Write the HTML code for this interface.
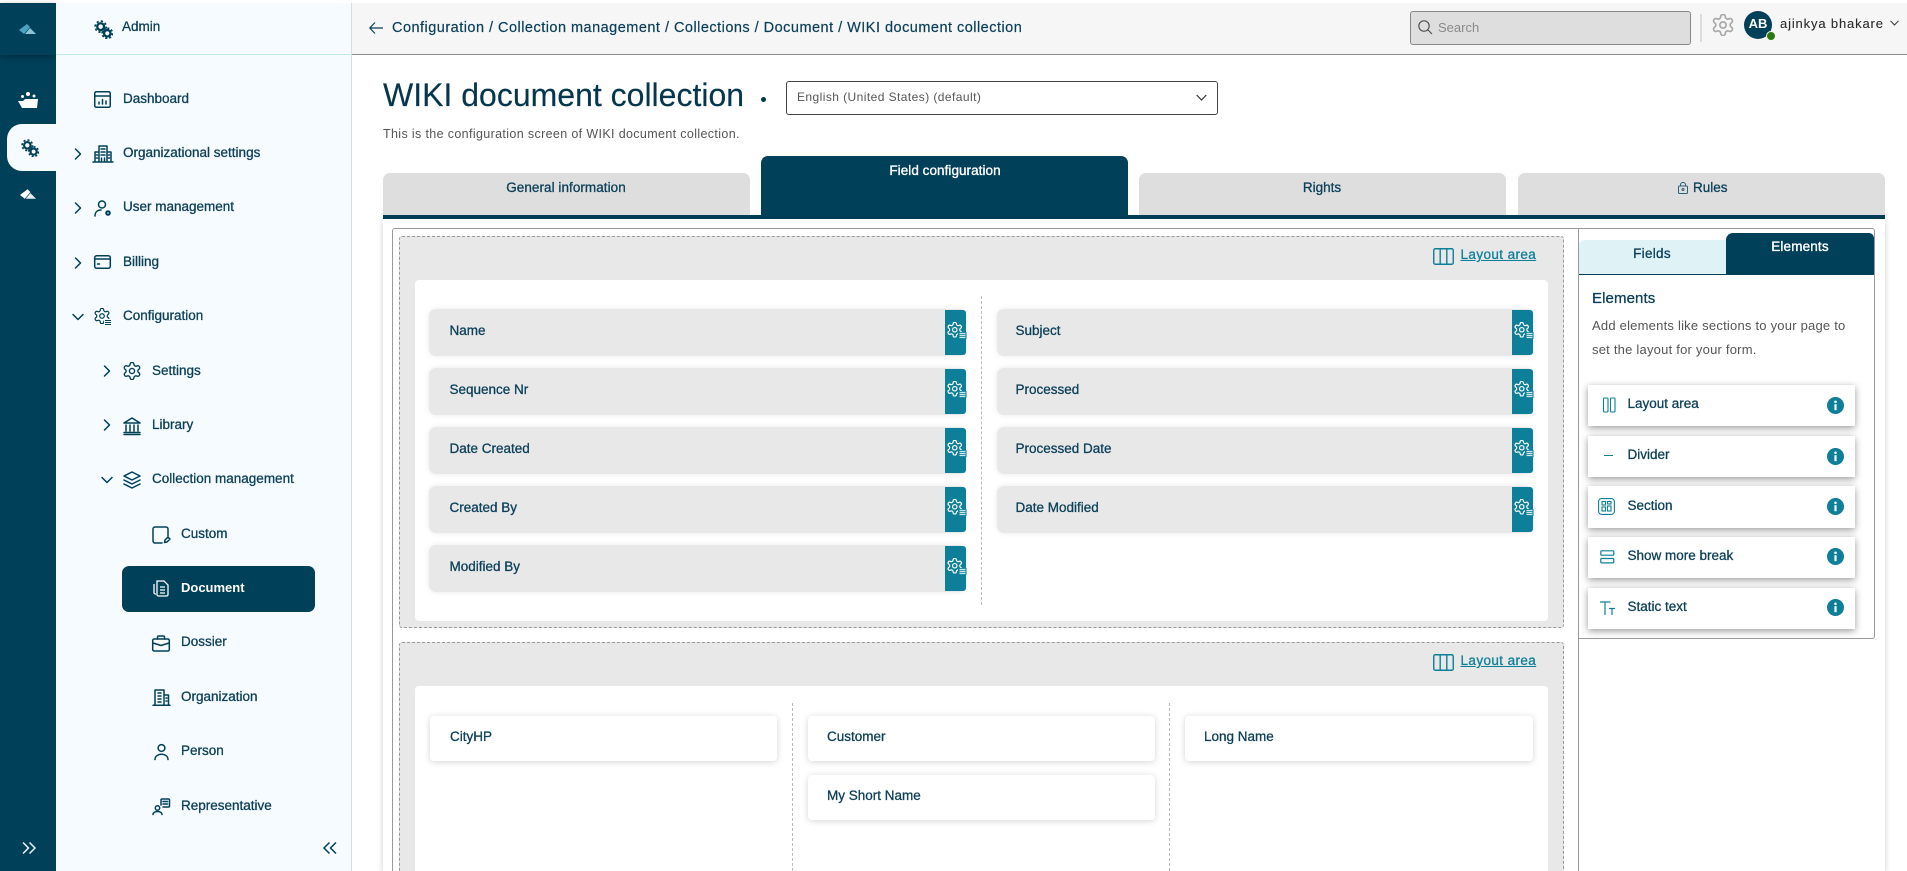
<!DOCTYPE html>
<html lang="en"><head><meta charset="utf-8"><title>WIKI document collection</title>
<style>
html,body{margin:0;padding:0;width:1907px;height:871px;overflow:hidden;background:#fff}
body{position:relative;font-family:"Liberation Sans",sans-serif;color:#004059}
.a{position:absolute;box-sizing:border-box}
.t{position:absolute;white-space:nowrap;transform:translateY(-50%);font-size:13.5px;line-height:16px;color:#0b3f58;-webkit-text-stroke:.3px currentColor}
.c{transform:translate(-50%,-50%)}
svg{position:absolute;overflow:visible}
.f{position:absolute;background:#e8e8e8;border-radius:7px;box-shadow:0 0 6px rgba(0,0,0,.09)}
.b{position:absolute;background:#0d7f99;border-radius:0 3px 3px 0;width:21px;height:45px}
.card{position:absolute;background:#fff;border-radius:4px;box-shadow:0 1px 7px rgba(0,0,0,.17);height:45px}
.el{position:absolute;left:1588px;width:267px;background:#fff;box-shadow:0 2px 7px rgba(0,0,0,.4)}
.ln{fill:none;stroke:#004059;stroke-width:1.5;stroke-linecap:round;stroke-linejoin:round}
</style></head><body>
<svg width="0" height="0" style="position:absolute"><defs>
<symbol id="gear" viewBox="1.5 1.5 21 21"><path fill="none" stroke="currentColor" stroke-width="1.6" d="M12.22 2h-.44a2 2 0 0 0-2 2v.18a2 2 0 0 1-1 1.73l-.43.25a2 2 0 0 1-2 0l-.15-.08a2 2 0 0 0-2.73.73l-.22.38a2 2 0 0 0 .73 2.73l.15.1a2 2 0 0 1 1 1.72v.51a2 2 0 0 1-1 1.74l-.15.09a2 2 0 0 0-.73 2.73l.22.38a2 2 0 0 0 2.73.73l.15-.08a2 2 0 0 1 2 0l.43.25a2 2 0 0 1 1 1.73V20a2 2 0 0 0 2 2h.44a2 2 0 0 0 2-2v-.18a2 2 0 0 1 1-1.73l.43-.25a2 2 0 0 1 2 0l.15.08a2 2 0 0 0 2.73-.73l.22-.39a2 2 0 0 0-.73-2.73l-.15-.08a2 2 0 0 1-1-1.74v-.5a2 2 0 0 1 1-1.74l.15-.09a2 2 0 0 0 .73-2.73l-.22-.38a2 2 0 0 0-2.73-.73l-.15.08a2 2 0 0 1-2 0l-.43-.25a2 2 0 0 1-1-1.73V4a2 2 0 0 0-2-2z"/><circle cx="12" cy="12" r="3" fill="none" stroke="currentColor" stroke-width="1.6"/></symbol>
<symbol id="cfg" viewBox="0 0 20 17"><use href="#gear" x="0" y="0" width="15.500" height="15.500" style="color:#fff"/><rect x="11" y="10" width="8.500" height="7" fill="#0d7f99"/><path d="M12.500 11.500h6M12.500 13.500h6M12.500 15.500h6" stroke="#cfe6ec" stroke-width="1.300"/></symbol>
<symbol id="cogs" viewBox="0 0 20 20"><g fill="none" stroke="currentColor"><circle cx="7" cy="7" r="3.600" stroke-width="2.400"/><circle cx="7" cy="7" r="5.800" stroke-width="1.800" stroke-dasharray="2.300 2.250"/><circle cx="14" cy="14" r="3.400" stroke-width="2.400"/><circle cx="14" cy="14" r="5.400" stroke-width="1.800" stroke-dasharray="2.200 2"/></g></symbol>
<symbol id="info" viewBox="0 0 17 17"><circle cx="8.500" cy="8.500" r="8.500" fill="#0d7f99"/><circle cx="8.500" cy="4.800" r="1.300" fill="#fff"/><rect x="7.400" y="7.200" width="2.200" height="6" fill="#fff"/></symbol>
<symbol id="lay" viewBox="0 0 21 17"><rect x=".75" y=".75" width="19.500" height="15.500" rx="1.500" fill="none" stroke="#0d7f99" stroke-width="1.400"/><path d="M7.200 1v15M13.800 1v15" stroke="#0d7f99" stroke-width="1.400"/></symbol>
</defs></svg>

<!-- rail -->
<div class="a" style="left:0;top:3px;width:56px;height:868px;background:#004059"></div>
<div class="a" style="left:0;top:3px;width:56px;height:52px;background:#004059;box-shadow:0 2px 6px rgba(0,0,0,.3)"></div>
<svg style="left:19px;top:24px" width="18" height="11" viewBox="0 0 18 11"><path d="M0 6 8 0l3 3-6 7z" fill="#4ba3c3"/><path d="M6 10l5-6 6 6z" fill="#8cc4d6"/></svg>
<svg style="left:18px;top:92px" width="21" height="17" viewBox="0 0 21 17" fill="#fff"><circle cx="10" cy="2" r="2"/><circle cx="4.500" cy="4.500" r="1.500"/><circle cx="16" cy="4" r="1.500"/><path d="M0 9h5l2-2h13l-1 9H4z"/></svg>
<div class="a" style="left:7px;top:124px;width:49px;height:47px;background:#f5fbff;border-radius:15px 0 0 15px"></div>
<svg style="left:21px;top:139px;color:#004059" width="18" height="18"><use href="#cogs"/></svg>
<svg style="left:20px;top:189px" width="17" height="11" viewBox="0 0 18 11"><path d="M0 6 8 0l3 3-6 7z" fill="#fff"/><path d="M6 10l5-6 6 6z" fill="#e6eef2"/></svg>
<svg style="left:22px;top:842px" width="14" height="12" viewBox="0 0 14 12"><path d="M1 .5 6.500 6 1 11.500M7.500.5 13 6l-5.500 5.500" fill="none" stroke="#e8f4f8" stroke-width="1.500"/></svg>

<!-- sidebar -->
<div class="a" style="left:56px;top:3px;width:296px;height:868px;background:#f5fbff;border-right:1px solid #d6dde2"></div>
<div class="a" style="left:56px;top:54px;width:295px;height:1px;background:#bfe6ea"></div>
<svg style="left:94px;top:20px;color:#004059" width="19" height="19"><use href="#cogs"/></svg>
<span class="t" style="left:122px;top:27px">Admin</span>

<svg style="left:94px;top:91px" width="17" height="17" viewBox="0 0 17 17" class="ln"><rect x=".75" y=".75" width="15.500" height="15.500" rx="1.500"/><path d="M1 5h15M5 13v-2M8.500 13V8.500M12 13v-3"/></svg>
<span class="t" style="left:123px;top:99px">Dashboard</span>

<svg style="left:74px;top:148px" width="8" height="12" viewBox="0 0 8 12" class="ln"><path d="M1.500 1 6.500 6l-5 5"/></svg>
<svg style="left:93px;top:145px" width="20" height="18" viewBox="0 0 20 18" class="ln" stroke-width="1.200"><path d="M6 17V1h8v16M2 17V7h4M14 7h4v10M0 17h20M8 4h4M8 7h4M8 10h4M8.500 13v4M11.500 13v4M3.500 10h1M3.500 13h1M15.500 10h1M15.500 13h1"/></svg>
<span class="t" style="left:123px;top:153px">Organizational settings</span>

<svg style="left:74px;top:202px" width="8" height="12" viewBox="0 0 8 12" class="ln"><path d="M1.500 1 6.500 6l-5 5"/></svg>
<svg style="left:94px;top:200px" width="18" height="17" viewBox="0 0 18 17" class="ln" stroke-width="1.300"><circle cx="8" cy="4.500" r="3.500"/><path d="M1 16c0-4 2.500-6 6-6"/><circle cx="14" cy="13" r="1.800" stroke-width="2"/></svg>
<span class="t" style="left:123px;top:207px">User management</span>

<svg style="left:74px;top:257px" width="8" height="12" viewBox="0 0 8 12" class="ln"><path d="M1.500 1 6.500 6l-5 5"/></svg>
<svg style="left:94px;top:255px" width="17" height="14" viewBox="0 0 17 14" class="ln" stroke-width="1.300"><rect x=".7" y=".7" width="15.600" height="12.600" rx="2"/><path d="M1 4h15M3.500 9h2"/></svg>
<span class="t" style="left:123px;top:262px">Billing</span>

<svg style="left:72px;top:313px" width="12" height="8" viewBox="0 0 12 8" class="ln"><path d="M1 1.500 6 6.500l5-5"/></svg>
<svg style="left:94px;top:308px;color:#004059" width="16" height="16"><use href="#gear"/></svg>
<div class="a" style="left:104px;top:319px;width:7px;height:6px;background:#f5fbff"></div>
<div class="a" style="left:105px;top:320px;width:6px;height:5px;background:repeating-linear-gradient(#004059 0 1px,transparent 1px 2px)"></div>
<span class="t" style="left:123px;top:316px">Configuration</span>

<svg style="left:103px;top:365px" width="8" height="12" viewBox="0 0 8 12" class="ln"><path d="M1.500 1 6.500 6l-5 5"/></svg>
<svg style="left:123px;top:362px;color:#004059" width="18" height="18"><use href="#gear"/></svg>
<span class="t" style="left:152px;top:371px">Settings</span>

<svg style="left:103px;top:419px" width="8" height="12" viewBox="0 0 8 12" class="ln"><path d="M1.500 1 6.500 6l-5 5"/></svg>
<svg style="left:123px;top:417px" width="18" height="18" viewBox="0 0 18 18" class="ln" stroke-width="1.300"><path d="M1 6 9 1l8 5zM3 8v6M7 8v6M11 8v6M15 8v6M1 15.500h16M1 17.500h16"/></svg>
<span class="t" style="left:152px;top:425px">Library</span>

<svg style="left:101px;top:476px" width="12" height="8" viewBox="0 0 12 8" class="ln"><path d="M1 1.500 6 6.500l5-5"/></svg>
<svg style="left:123px;top:471px" width="18" height="18" viewBox="0 0 18 18" class="ln" stroke-width="1.300"><path d="M9 1l8 4-8 4-8-4zM1 9l8 4 8-4M1 13l8 4 8-4"/></svg>
<span class="t" style="left:152px;top:479px">Collection management</span>

<svg style="left:152px;top:526px" width="19" height="18" viewBox="0 0 19 18" class="ln" stroke-width="1.300" stroke="#2c6076"><path d="M10 17H3a2 2 0 0 1-2-2V3a2 2 0 0 1 2-2h11a2 2 0 0 1 2 2v7"/><path d="M12.500 16.500l.5-2.500 3-3 2 2-3 3z"/></svg>
<span class="t" style="left:181px;top:534px">Custom</span>

<div class="a" style="left:122px;top:566px;width:193px;height:46px;background:#004059;border-radius:7px"></div>
<svg style="left:153px;top:580px" width="16" height="18" viewBox="0 0 16 18" fill="none" stroke="#fff" stroke-width="1.300"><path d="M3 14H2.500A1.500 1.500 0 0 1 1 12.500V4"/><path d="M4 1h7l4 4v9.500a1.500 1.500 0 0 1-1.500 1.500h-8A1.500 1.500 0 0 1 4 14.500zM7 7h5M7 10h5M7 13h5" /></svg>
<span class="t" style="left:181px;top:588px;color:#fff;font-weight:bold;font-size:13px;-webkit-text-stroke:0">Document</span>

<svg style="left:152px;top:635px" width="18" height="17" viewBox="0 0 18 17" class="ln" stroke-width="1.300" stroke="#2c6076"><rect x=".7" y="4" width="16.600" height="12" rx="1.500"/><path d="M5.500 4V2a1 1 0 0 1 1-1h5a1 1 0 0 1 1 1v2M1 8l8 2.500L17 8"/></svg>
<span class="t" style="left:181px;top:642px">Dossier</span>

<svg style="left:153px;top:689px" width="17" height="17" viewBox="0 0 17 17" class="ln" stroke-width="1.300"><path d="M2 16V1h9v15M11 6h4.500v10M0 16.300h17M5 4h3M5 7h3M5 10h3M5 13h3M13 9h1M13 12h1"/></svg>
<span class="t" style="left:181px;top:697px">Organization</span>

<svg style="left:154px;top:744px" width="15" height="16" viewBox="0 0 15 16" class="ln" stroke-width="1.300"><circle cx="7.500" cy="4" r="3.400"/><path d="M1 15.500c0-7 13-7 13 0"/></svg>
<span class="t" style="left:181px;top:751px">Person</span>

<svg style="left:152px;top:798px" width="18" height="17" viewBox="0 0 18 17" class="ln" stroke-width="1.200"><path d="M9 7V2a1 1 0 0 1 1-1h6.500a1 1 0 0 1 1 1v6a1 1 0 0 1-1 1H11M11 3.500h4.500M11 6h4.500"/><circle cx="5.500" cy="10" r="2.200"/><path d="M1 16.500c0-4 9-4 9 0"/></svg>
<span class="t" style="left:181px;top:806px">Representative</span>

<svg style="left:323px;top:842px" width="14" height="12" viewBox="0 0 14 12"><path d="M6.500.5 1 6l5.500 5.500M13 .5 7.500 6l5.500 5.500" fill="none" stroke="#004059" stroke-width="1.500"/></svg>

<!-- header -->
<div class="a" style="left:352px;top:3px;width:1555px;height:52px;background:#f6f6f6;border-bottom:1px solid #8a8a8a"></div>
<svg style="left:369px;top:22px" width="14" height="12" viewBox="0 0 14 12"><path d="M6 .5.800 6 6 11.500M1 6h13" fill="none" stroke="#0b3f58" stroke-width="1.200"/></svg>
<span class="t" style="left:392px;top:28px;font-size:14.5px;letter-spacing:.48px;-webkit-text-stroke:.2px currentColor">Configuration / Collection management / Collections / Document / WIKI document collection</span>
<div class="a" style="left:1410px;top:11px;width:281px;height:34px;background:#dedede;border:1px solid #888;border-radius:3px"></div>
<svg style="left:1418px;top:20px" width="15" height="15" viewBox="0 0 15 15" fill="none" stroke="#555" stroke-width="1.200"><circle cx="6" cy="6" r="5.200"/><path d="M9.800 9.800 14 14"/></svg>
<span class="t" style="left:1438px;top:28px;color:#8a8a8a;-webkit-text-stroke:0;font-size:13px">Search</span>
<div class="a" style="left:1700px;top:14px;width:2px;height:28px;background:#dcdcdc"></div>
<svg style="left:1712px;top:14px;color:#a9a9a9" width="22" height="22"><use href="#gear"/></svg>
<div class="a" style="left:1744px;top:11px;width:28px;height:28px;border-radius:50%;background:#004059"></div>
<span class="t c" style="left:1758px;top:24px;color:#fff;font-weight:bold;font-size:13px;-webkit-text-stroke:0">AB</span>
<div class="a" style="left:1766px;top:31px;width:10px;height:10px;border-radius:50%;background:#2a7a0e;border:1px solid #f6f6f6"></div>
<span class="t" style="left:1780px;top:24px;color:#2b2b2b;letter-spacing:.85px;-webkit-text-stroke:.1px currentColor;font-size:13px">ajinkya bhakare</span>
<svg style="left:1890px;top:20px" width="9" height="6" viewBox="0 0 9 6"><path d="M.5.800 4.500 5 8.500.800" fill="none" stroke="#333" stroke-width="1"/></svg>

<!-- title -->
<span class="t" style="left:383px;top:95px;font-size:32px;line-height:38px;letter-spacing:0;color:#06364d;-webkit-text-stroke:.15px #06364d">WIKI document collection</span>
<div class="a" style="left:761px;top:97px;width:5px;height:5px;border-radius:50%;background:#06364d"></div>
<div class="a" style="left:786px;top:81px;width:432px;height:34px;border:1px solid #444;border-radius:3px;background:#fff"></div>
<span class="t" style="left:797px;top:97px;font-size:12px;color:#555;letter-spacing:.43px;-webkit-text-stroke:0">English (United States) (default)</span>
<svg style="left:1196px;top:94px" width="11" height="7" viewBox="0 0 11 7"><path d="M.7 1 5.500 6l4.800-5" fill="none" stroke="#333" stroke-width="1.200"/></svg>
<span class="t" style="left:383px;top:134px;font-size:12.5px;color:#555;letter-spacing:.36px;-webkit-text-stroke:0">This is the configuration screen of WIKI document collection.</span>

<!-- tabs -->
<div class="a" style="left:383px;top:173px;width:367px;height:42px;background:#dedede;border-radius:7px 7px 0 0"></div>
<div class="a" style="left:761px;top:156px;width:367px;height:60px;background:#004059;border-radius:7px 7px 0 0"></div>
<div class="a" style="left:1139px;top:173px;width:367px;height:42px;background:#dedede;border-radius:7px 7px 0 0"></div>
<div class="a" style="left:1518px;top:173px;width:367px;height:42px;background:#dedede;border-radius:7px 7px 0 0"></div>
<span class="t c" style="left:566px;top:188px;letter-spacing:.05px">General information</span>
<span class="t c" style="left:945px;top:171px;color:#fff;-webkit-text-stroke:.35px #fff;letter-spacing:.05px">Field configuration</span>
<span class="t c" style="left:1322px;top:188px">Rights</span>
<svg style="left:1678px;top:182px" width="10" height="12" viewBox="0 0 10 12" fill="none" stroke="#2c6076" stroke-width="1"><rect x=".5" y="4" width="9" height="7.500" rx="1"/><path d="M2.500 4V2.500a2.500 2 0 0 1 5 0V4"/><circle cx="5" cy="7.500" r="1"/></svg>
<span class="t" style="left:1693px;top:188px">Rules</span>
<div class="a" style="left:383px;top:215px;width:1502px;height:4px;background:#004059"></div>
<div class="a" style="left:383px;top:219px;width:1502px;height:652px;background:#fff;box-shadow:0 2px 6px rgba(0,0,0,.2)"></div>

<!-- inner frame -->
<div class="a" style="left:392px;top:228px;width:1187px;height:643px;border-left:1px solid #999;border-top:1px solid #999;border-right:1px solid #999;border-top-left-radius:3px"></div>
<div class="a" style="left:1578px;top:228px;width:297px;height:411px;border:1px solid #999;border-radius:0 3px 3px 0"></div>

<!-- layout 1 -->
<div class="a" style="left:399px;top:236px;width:1165px;height:392px;background:#e8e8e8;border:1px dashed #999;border-radius:3px"></div>
<svg style="left:1433px;top:248px" width="21" height="17"><use href="#lay"/></svg>
<span class="t" style="left:1460.500px;top:255px;color:#0d7f99;text-decoration:underline;letter-spacing:.4px">Layout area</span>
<div class="a" style="left:415px;top:280px;width:1133px;height:341px;background:#fff;border-radius:4px"></div>
<div class="a" style="left:981px;top:296px;height:309px;border-left:1px dashed #bbb"></div>

<div class="f" style="left:429px;top:309px;width:537px;height:47px"></div><div class="b" style="left:945px;top:310px"></div><svg style="left:946.500px;top:322px" width="20" height="17"><use href="#cfg"/></svg><span class="t" style="left:449.500px;top:331px">Name</span>
<div class="f" style="left:429px;top:368px;width:537px;height:47px"></div><div class="b" style="left:945px;top:369px"></div><svg style="left:946.500px;top:381px" width="20" height="17"><use href="#cfg"/></svg><span class="t" style="left:449.500px;top:390px">Sequence Nr</span>
<div class="f" style="left:429px;top:427px;width:537px;height:47px"></div><div class="b" style="left:945px;top:428px"></div><svg style="left:946.500px;top:440px" width="20" height="17"><use href="#cfg"/></svg><span class="t" style="left:449.500px;top:449px">Date Created</span>
<div class="f" style="left:429px;top:486px;width:537px;height:47px"></div><div class="b" style="left:945px;top:487px"></div><svg style="left:946.500px;top:499px" width="20" height="17"><use href="#cfg"/></svg><span class="t" style="left:449.500px;top:508px">Created By</span>
<div class="f" style="left:429px;top:545px;width:537px;height:47px"></div><div class="b" style="left:945px;top:546px"></div><svg style="left:946.500px;top:558px" width="20" height="17"><use href="#cfg"/></svg><span class="t" style="left:449.500px;top:567px">Modified By</span>

<div class="f" style="left:997px;top:309px;width:536px;height:47px"></div><div class="b" style="left:1512px;top:310px"></div><svg style="left:1513.500px;top:322px" width="20" height="17"><use href="#cfg"/></svg><span class="t" style="left:1015.500px;top:331px">Subject</span>
<div class="f" style="left:997px;top:368px;width:536px;height:47px"></div><div class="b" style="left:1512px;top:369px"></div><svg style="left:1513.500px;top:381px" width="20" height="17"><use href="#cfg"/></svg><span class="t" style="left:1015.500px;top:390px">Processed</span>
<div class="f" style="left:997px;top:427px;width:536px;height:47px"></div><div class="b" style="left:1512px;top:428px"></div><svg style="left:1513.500px;top:440px" width="20" height="17"><use href="#cfg"/></svg><span class="t" style="left:1015.500px;top:449px">Processed Date</span>
<div class="f" style="left:997px;top:486px;width:536px;height:47px"></div><div class="b" style="left:1512px;top:487px"></div><svg style="left:1513.500px;top:499px" width="20" height="17"><use href="#cfg"/></svg><span class="t" style="left:1015.500px;top:508px">Date Modified</span>

<!-- layout 2 -->
<div class="a" style="left:399px;top:642px;width:1165px;height:240px;background:#e8e8e8;border:1px dashed #999;border-radius:3px"></div>
<svg style="left:1433px;top:654px" width="21" height="17"><use href="#lay"/></svg>
<span class="t" style="left:1460.500px;top:661px;color:#0d7f99;text-decoration:underline;letter-spacing:.4px">Layout area</span>
<div class="a" style="left:415px;top:686px;width:1133px;height:195px;background:#fff;border-radius:4px"></div>
<div class="a" style="left:792px;top:703px;height:168px;border-left:1px dashed #bbb"></div>
<div class="a" style="left:1169px;top:703px;height:168px;border-left:1px dashed #bbb"></div>
<div class="card" style="left:430px;top:716px;width:347px"></div><span class="t" style="left:450px;top:737px">CityHP</span>
<div class="card" style="left:808px;top:716px;width:347px"></div><span class="t" style="left:827px;top:737px">Customer</span>
<div class="card" style="left:1185px;top:716px;width:348px"></div><span class="t" style="left:1204px;top:737px">Long Name</span>
<div class="card" style="left:808px;top:775px;width:347px"></div><span class="t" style="left:827px;top:796px">My Short Name</span>

<!-- right panel -->
<div class="a" style="left:1579px;top:240px;width:147px;height:34px;background:#dff2f6;border-radius:5px 0 0 0"></div>
<div class="a" style="left:1726px;top:233px;width:148px;height:42px;background:#004059;border-radius:7px 5px 0 0"></div>
<div class="a" style="left:1579px;top:274px;width:295px;height:1px;background:#004059"></div>
<span class="t c" style="left:1652px;top:254px;letter-spacing:.3px">Fields</span>
<span class="t c" style="left:1800px;top:247px;color:#fff;letter-spacing:.15px;-webkit-text-stroke:.35px #fff">Elements</span>
<span class="t" style="left:1592px;top:299px;font-size:15px;letter-spacing:.1px">Elements</span>
<span class="t" style="left:1592px;top:326px;color:#555;-webkit-text-stroke:0;font-size:13px;letter-spacing:.22px">Add elements like sections to your page to</span>
<span class="t" style="left:1592px;top:350px;color:#555;-webkit-text-stroke:0;font-size:13px;letter-spacing:.22px">set the layout for your form.</span>

<div class="el" style="top:385px;height:41px"></div>
<svg style="left:1602px;top:397px" width="17" height="16" viewBox="0 0 17 16" fill="none" stroke="#0d7f99" stroke-width="1.100"><rect x="1.500" y="1" width="4.500" height="14" rx="1"/><rect x="8.500" y="1" width="4.500" height="14" rx="1"/></svg>
<span class="t" style="left:1627.500px;top:404px">Layout area</span>
<svg style="left:1826.500px;top:396.500px" width="17" height="17"><use href="#info"/></svg>

<div class="el" style="top:436px;height:41px"></div>
<div class="a" style="left:1604px;top:455px;width:9px;height:1px;background:#0d7f99"></div>
<span class="t" style="left:1627.500px;top:455px">Divider</span>
<svg style="left:1826.500px;top:447.500px" width="17" height="17"><use href="#info"/></svg>

<div class="el" style="top:486px;height:42px"></div>
<svg style="left:1598px;top:498px" width="17" height="17" viewBox="0 0 17 17" fill="none" stroke="#0d7f99" stroke-width="1.100"><rect x=".6" y=".6" width="15.800" height="15.800" rx="3"/><rect x="4" y="3.500" width="3.500" height="3.500"/><rect x="9.500" y="3.500" width="3.500" height="2.500"/><rect x="4" y="9" width="3.500" height="4" /><rect x="9.500" y="8" width="3.500" height="5"/></svg>
<span class="t" style="left:1627.500px;top:506px">Section</span>
<svg style="left:1826.500px;top:498px" width="17" height="17"><use href="#info"/></svg>

<div class="el" style="top:537px;height:41px"></div>
<svg style="left:1600px;top:550px" width="15" height="14" viewBox="0 0 15 14" fill="none" stroke="#0d7f99" stroke-width="1.200"><rect x=".8" y=".8" width="13" height="4.400" rx="1"/><rect x=".8" y="8.500" width="13" height="4.400" rx="1"/></svg>
<span class="t" style="left:1627.500px;top:556px">Show more break</span>
<svg style="left:1826.500px;top:548px" width="17" height="17"><use href="#info"/></svg>

<div class="el" style="top:588px;height:41px"></div>
<svg style="left:1600px;top:601px" width="15" height="15" viewBox="0 0 15 15" fill="none" stroke="#0d7f99" stroke-width="1.200"><path d="M0 1h10.500M5 1v13M9 7.500h6M12 7.500V14"/></svg>
<span class="t" style="left:1627.500px;top:607px">Static text</span>
<svg style="left:1826.500px;top:599px" width="17" height="17"><use href="#info"/></svg>
</body></html>
